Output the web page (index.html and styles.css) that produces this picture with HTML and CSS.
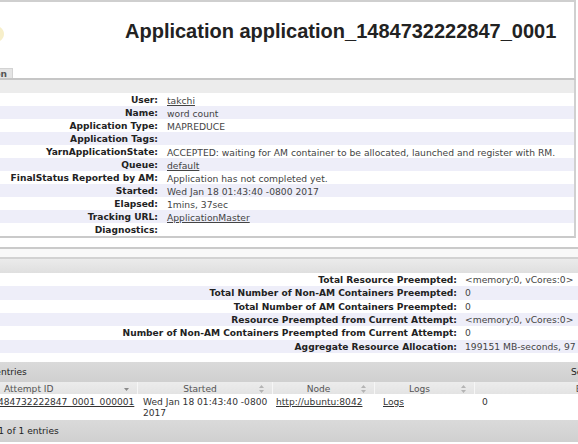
FILE: index.html
```html
<!DOCTYPE html>
<html lang="en">
<head>
    <meta charset="UTF-8">
    <title>Application application_1484732222847_0001</title>
    <link rel="stylesheet" href="styles.css">
</head>
<body>
<div class="page">
    <div class="head">
        <div class="brand">
            <svg class="logo" width="40" height="24" viewBox="0 0 40 24"><ellipse cx="22" cy="12" rx="18" ry="11" fill="#f4e9b4"/></svg>
            <h1>Application application_1484732222847_0001</h1>
        </div>
        <div class="tabs"><span class="tab">Application</span></div>
    </div>

    <div class="info overview">
        <table>
            <thead><tr><th colspan="2">Application Overview</th></tr></thead>
            <tbody>
                <tr><th>User:</th><td><a href="#">takchi</a></td></tr>
                <tr><th>Name:</th><td>word count</td></tr>
                <tr><th>Application Type:</th><td>MAPREDUCE</td></tr>
                <tr><th>Application Tags:</th><td></td></tr>
                <tr><th>YarnApplicationState:</th><td>ACCEPTED: waiting for AM container to be allocated, launched and register with RM.</td></tr>
                <tr><th>Queue:</th><td><a href="#">default</a></td></tr>
                <tr><th>FinalStatus Reported by AM:</th><td>Application has not completed yet.</td></tr>
                <tr><th>Started:</th><td>Wed Jan 18 01:43:40 -0800 2017</td></tr>
                <tr><th>Elapsed:</th><td>1mins, 37sec</td></tr>
                <tr><th>Tracking URL:</th><td><a href="#">ApplicationMaster</a></td></tr>
                <tr><th>Diagnostics:</th><td></td></tr>
            </tbody>
        </table>
    </div>

    <div class="info metrics">
        <div class="metrics-top"></div>
        <table>
            <thead><tr><th colspan="2">Application Metrics</th></tr></thead>
            <tbody>
                <tr><th>Total Resource Preempted:</th><td>&lt;memory:0, vCores:0&gt;</td></tr>
                <tr><th>Total Number of Non-AM Containers Preempted:</th><td>0</td></tr>
                <tr><th>Total Number of AM Containers Preempted:</th><td>0</td></tr>
                <tr><th>Resource Preempted from Current Attempt:</th><td>&lt;memory:0, vCores:0&gt;</td></tr>
                <tr><th>Number of Non-AM Containers Preempted from Current Attempt:</th><td>0</td></tr>
                <tr><th>Aggregate Resource Allocation:</th><td>199151 MB-seconds, 97 vcore-seconds</td></tr>
            </tbody>
        </table>
    </div>

    <div class="grid">
        <div class="toolbar">
            <span class="len">Show <span class="sel">20</span> entries</span>
            <span class="search">Search:</span>
        </div>
        <table>
            <colgroup>
                <col class="c-id"><col class="c-start"><col class="c-node"><col class="c-logs"><col class="c-black">
            </colgroup>
            <thead>
                <tr>
                    <th><div class="sort"><span>Attempt ID</span><svg width="5" height="3" viewBox="0 0 5 3"><path d="M0 0h5L2.5 3z" fill="#8a8a8a"/></svg></div></th>
                    <th><div class="sort"><span>Started</span><svg width="5" height="8" viewBox="0 0 5 8"><path d="M2.5 0L5 3H0zM0 5h5L2.5 8z" fill="#b4b4b4"/></svg></div></th>
                    <th><div class="sort"><span>Node</span><svg width="5" height="8" viewBox="0 0 5 8"><path d="M2.5 0L5 3H0zM0 5h5L2.5 8z" fill="#b4b4b4"/></svg></div></th>
                    <th><div class="sort"><span>Logs</span><svg width="5" height="8" viewBox="0 0 5 8"><path d="M2.5 0L5 3H0zM0 5h5L2.5 8z" fill="#b4b4b4"/></svg></div></th>
                    <th><div class="sort"><span>Blacklisted Nodes</span></div></th>
                </tr>
            </thead>
            <tbody>
                <tr>
                    <td><a href="#">appattempt_1484732222847_0001_000001</a></td>
                    <td class="pad-start">Wed Jan 18 01:43:40 -0800 2017</td>
                    <td><a href="#">http://ubuntu:8042</a></td>
                    <td class="pad-logs"><a href="#">Logs</a></td>
                    <td class="pad-black">0</td>
                </tr>
            </tbody>
        </table>
        <div class="toolbar foot">Showing 1 to 1 of 1 entries</div>
    </div>
</div>
</body>
</html>
```

FILE: styles.css
```css
html, body {
    margin: 0;
    padding: 0;
    background: #fff;
    overflow: hidden;
}
body {
    font-family: "DejaVu Sans", sans-serif;
    font-size: 9.1px;
    color: #333;
}
a {
    color: #444;
}
.page {
    margin-left: -84px;
    width: 1000px;
}
.head {
    width: 658px;
    height: 76px;
    border-top: 2px solid #cfcfcf;
    border-right: 2px solid #d0d0d0;
    border-bottom: 2px solid #c6c6c6;
    display: flex;
    flex-direction: column;
    justify-content: space-between;
}
.brand {
    display: flex;
    align-items: flex-start;
}
.logo {
    margin: 20px 0 0 48px;
    opacity: 0.7;
}
.head h1 {
    margin: 0;
    padding: 18px 0 0 121px;
    font-family: "Liberation Sans", Arial, sans-serif;
    font-size: 20px;
    line-height: 23px;
    font-weight: bold;
    color: #222;
}
.tabs {
    padding-left: 27px;
    height: 10px;
}
.tab {
    display: inline-block;
    height: 10px;
    line-height: 11px;
    padding: 0 5px;
    background: #e4e4e4;
    border: 1px solid #d3d3d3;
    border-bottom: none;
    box-sizing: border-box;
    font-weight: bold;
    color: #555;
    overflow: hidden;
}
.info table {
    border-collapse: collapse;
    width: 100%;
}
.info th, .info td {
    padding: 0;
    white-space: nowrap;
}
.info thead tr {
    height: 13px;
}
.info thead th {
    background: #ececec;
    line-height: 13px;
    text-align: left;
    color: transparent;
    font-weight: normal;
}
.info tbody tr {
    height: 13px;
}
.info tbody th, .info tbody td {
    padding-top: 2px;
    line-height: 11px;
}
.info tbody th {
    text-align: right;
    padding-right: 4px;
    color: #222;
}
.info tbody td {
    padding-left: 5px;
    font-size: 9.2px;
    color: #444;
}
.info tbody tr:nth-child(even) {
    background: #eeeef9;
}
.overview {
    width: 658px;
    border-right: 2px solid #d0d0d0;
    border-bottom: 2px solid #cacaca;
}
.overview tbody th {
    width: 242px;
}
.metrics {
    margin-top: 9px;
    width: 760px;
    border-top: 2px solid #cacaca;
}
.metrics-top {
    height: 8px;
    background: #f8f8f8;
    border-bottom: 2px solid #d2d2d2;
}
.metrics thead tr {
    height: 14px;
}
.metrics thead th {
    line-height: 14px;
    background: linear-gradient(#ebebeb, #dfdfdf);
}
.metrics tbody tr {
    height: 13.33px;
}
.metrics tbody th, .metrics tbody td {
    padding-top: 1px;
    line-height: 12.33px;
}
.metrics tbody th {
    width: 541px;
}
.metrics tbody td {
    padding-left: 4px;
}
.grid {
    margin: 9px 0 0 14px;
    width: 832px;
}
.toolbar {
    display: flex;
    height: 20px;
    line-height: 21px;
    padding-left: 4px;
    background: linear-gradient(#dadada, #d0d0d0);
    color: #222;
}
.len {
    flex: 0 0 637px;
}
.sel {
    display: inline-block;
    width: 31px;
    color: transparent;
}
.grid table {
    border-collapse: collapse;
    table-layout: fixed;
    width: 100%;
}
.c-id { width: 207px; }
.c-start { width: 135px; }
.c-node { width: 102px; }
.c-logs { width: 100px; }
.c-black { width: 288px; }
.grid thead tr {
    height: 12px;
}
.grid thead th {
    line-height: 9px;
    padding: 3px 8px 0 4px;
    background: linear-gradient(#ececec, #e3e3e3);
    border-right: 1px solid #f6f6f6;
    font-weight: normal;
    color: #555;
}
.sort {
    display: flex;
    align-items: center;
}
.sort span {
    flex: 1;
    text-align: center;
}
.grid tbody tr {
    height: 26px;
}
.grid tbody td {
    vertical-align: top;
    padding: 3px 4px 0;
    line-height: 11.5px;
    color: #333;
    background: #fff;
}
.grid tbody a {
    color: #333;
}
.pad-start { padding: 3px 0 0 6px !important; }
.pad-logs { padding-left: 9px !important; }
.pad-black { padding-left: 8px !important; }
.foot {
    height: 22px;
    line-height: 22px;
    padding-left: 6px;
}
```
